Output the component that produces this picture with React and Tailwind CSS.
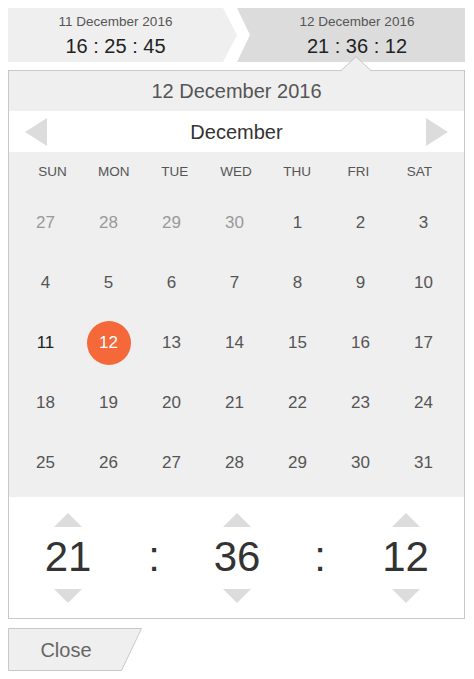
import React from 'react';

const prevMonth = [27, 28, 29, 30];
const weekdays = ['SUN', 'MON', 'TUE', 'WED', 'THU', 'FRI', 'SAT'];

function buildDays() {
  const days = prevMonth.map((d) => ({ d, muted: true }));
  for (let i = 1; i <= 31; i++) days.push({ d: i, muted: false });
  return days;
}

function Triangle({ dir }) {
  const pts = {
    up: '14,0 28,14 0,14',
    down: '0,0 28,0 14,14',
  };
  return (
    <svg width="28" height="14" viewBox="0 0 28 14" className="block">
      <polygon points={pts[dir]} fill="#dcdcdc" />
    </svg>
  );
}

function NavArrow({ dir }) {
  return (
    <svg width="22" height="28" viewBox="0 0 22 28" className="block">
      <polygon
        points={dir === 'left' ? '22,0 22,28 0,14' : '0,0 22,14 0,28'}
        fill="#dcdcdc"
      />
    </svg>
  );
}

function TimeUnit({ value }) {
  return (
    <div className="flex flex-col items-center">
      <Triangle dir="up" />
      <div className="mt-[9px] text-[42px] leading-[42px] text-[#333]">{value}</div>
      <div className="mt-[11px]">
        <Triangle dir="down" />
      </div>
    </div>
  );
}

function Colon() {
  return (
    <div className="flex justify-center pt-[23px] text-[42px] leading-[42px] text-[#333]">:</div>
  );
}

export default function App() {
  const days = buildDays();

  return (
    <div
      className="w-[474px] h-[679px] bg-white p-2"
      style={{ fontFamily: '"Liberation Sans", Arial, sans-serif' }}
    >
      {/* range tabs */}
      <div className="flex h-[54px] w-[457px]">
        <div className="w-[229px] bg-[#efefef] pt-[6px] pr-[14px] flex flex-col items-center [clip-path:polygon(0_0,calc(100%-14px)_0,100%_50%,calc(100%-14px)_100%,0_100%)]">
          <div className="text-[13.5px] leading-[16px] text-[#555]">11 December 2016</div>
          <div className="mt-[4px] text-[20px] leading-[24px] text-[#222]">16 : 25 : 45</div>
        </div>
        <div className="w-[228px] bg-[#dcdcdc] pt-[6px] pl-[12px] flex flex-col items-center [clip-path:polygon(0_0,100%_0,100%_100%,0_100%,13px_50%)]">
          <div className="text-[13.5px] leading-[16px] text-[#555]">12 December 2016</div>
          <div className="mt-[4px] text-[20px] leading-[24px] text-[#222]">21 : 36 : 12</div>
        </div>
      </div>

      {/* picker panel */}
      <div className="relative mt-2 w-[457px] border border-[#c8c8c8]">
        <svg
          width="30"
          height="15"
          viewBox="0 0 30 15"
          className="absolute left-[332px] top-[-15px] block"
        >
          <polygon points="0,15 15,1 30,15" fill="#efefef" />
          <polyline points="0,14.5 15,0.8 30,14.5" fill="none" stroke="#c8c8c8" strokeWidth="1" />
        </svg>

        <div className="h-[40px] bg-[#efefef] flex items-center justify-center text-[20px] text-[#555]">
          12 December 2016
        </div>

        <div className="h-[41px] bg-white flex items-center justify-between px-4">
          <NavArrow dir="left" />
          <div className="text-[20px] text-[#333]">December</div>
          <NavArrow dir="right" />
        </div>

        <div className="bg-[#efefef] pb-[4px]">
          <div className="grid grid-cols-7 h-[41px] items-center pl-[13px] pr-[14px]">
            {weekdays.map((w) => (
              <div key={w} className="text-center text-[13.5px] text-[#555]">
                {w}
              </div>
            ))}
          </div>
          <div className="grid grid-cols-7 auto-rows-[60px] pl-[5px] pr-[9px]">
            {days.map(({ d, muted }, i) => {
              const selected = !muted && d === 12;
              const today = !muted && d === 11;
              let color = 'text-[#555]';
              if (muted) color = 'text-[#999]';
              if (today) color = 'text-[#222]';
              return (
                <div key={i} className="flex items-center justify-center">
                  {selected ? (
                    <div className="w-[44px] h-[44px] rounded-full bg-[#f5683a] flex items-center justify-center text-[17px] text-white">
                      {d}
                    </div>
                  ) : (
                    <span className={`text-[17px] ${color}`}>{d}</span>
                  )}
                </div>
              );
            })}
          </div>
        </div>

        <div className="bg-white pt-[16px] pb-[15px] grid grid-cols-[118px_54px_112px_54px_1fr]">
          <TimeUnit value="21" />
          <Colon />
          <TimeUnit value="36" />
          <Colon />
          <TimeUnit value="12" />
        </div>
      </div>

      {/* close */}
      <button
        type="button"
        className="relative mt-[9px] w-[134px] h-[43px] block"
      >
        <svg width="134" height="43" viewBox="0 0 134 43" className="absolute inset-0 block">
          <polygon points="0.5,0.5 133.5,0.5 113.5,42.5 0.5,42.5" fill="#efefef" stroke="#c8c8c8" strokeWidth="1" />
        </svg>
        <span className="relative flex h-full items-center justify-center pr-[18px] text-[20px] text-[#666]">
          Close
        </span>
      </button>
    </div>
  );
}
